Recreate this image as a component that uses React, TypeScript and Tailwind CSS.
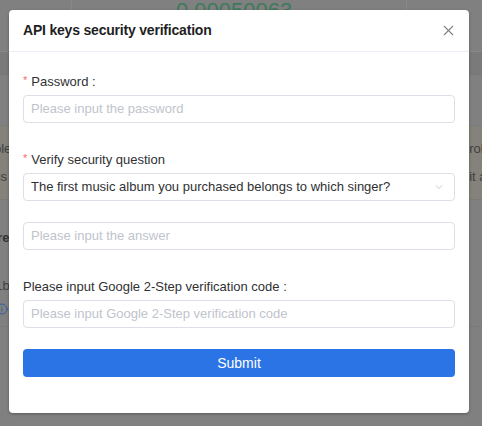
import { ChevronDown, X, Info } from "lucide-react";

const FONT = { fontFamily: '"Liberation Sans", Arial, sans-serif' };

function Label({ text, required }: { text: string; required?: boolean }) {
  return (
    <div className="flex items-center h-[20px] text-[13px] text-[#303133] leading-none">
      {required && <span className="text-[#f56c6c] text-[11px] mr-[4px] mt-[-2px]">*</span>}
      <span>{text}</span>
    </div>
  );
}

function TextInput({ placeholder }: { placeholder: string }) {
  return (
    <div className="h-[28px] border border-[#dcdfe6] rounded-[4px] flex items-center px-[7px] text-[13px] text-[#c0c4cc] bg-white">
      {placeholder}
    </div>
  );
}

export default function App() {
  return (
    <div className="relative w-[482px] h-[426px] overflow-hidden bg-[#808080]" style={FONT}>
      {/* página por trás do modal */}
      <div className="flex flex-col">
        <div className="h-[52px] flex border-b border-[#888]">
          <div className="w-[72px] border-r border-[#888]" />
          <div className="flex-1 pl-[104px]">
            <span className="text-[22px] leading-none text-[#3d7a5c] whitespace-nowrap">
              0.00050063 <span className="text-[11px]">BTC</span>
            </span>
          </div>
          <div className="w-[76px] border-l border-[#888]" />
        </div>
        <div className="h-[23px] bg-[#7a7a7a] border-b border-[#777]" />
        <div className="h-[50px]" />
        <div className="h-[75px] bg-[#85827b] border-y border-[#7b7b7b] flex justify-between items-center text-[13px] text-[#404040]">
          <div className="flex flex-col gap-[8px] ml-[-6px]">
            <span>ble</span>
            <span>ss v</span>
          </div>
          <div className="flex flex-col gap-[8px] mr-[-6px]">
            <span>rob</span>
            <span>it a</span>
          </div>
        </div>
        <div className="h-[28px]" />
        <div className="text-[13px] text-[#333] ml-[-10px] font-bold">are</div>
        <div className="h-[28px]" />
        <div className="text-[13px] text-[#404040] ml-[-12px]">d1b</div>
        <div className="mt-[8px] ml-[-4px] text-[#2f5f9f]">
          <Info size={12} />
        </div>
        <div className="h-[12px] border-b border-[#7a7a7a]" />
      </div>

      {/* modal */}
      <div className="absolute left-[9px] top-[10px] w-[460px] h-[403px] bg-white rounded-[4px] shadow-[0_1px_3px_rgba(0,0,0,0.3)] flex flex-col">
        <div className="h-[42px] flex items-center justify-between px-[14px] border-b border-[#ebeef5]">
          <span className="text-[14px] font-bold tracking-[-0.2px] text-[#1f1f1f]">API keys security verification</span>
          <X size={17} strokeWidth={1.5} className="text-[#7f7f7f] mr-[-2px]" />
        </div>
        <div className="flex flex-col px-[14px] pt-[19px]">
          <Label text="Password :" required />
          <div className="mt-[4px]">
            <TextInput placeholder="Please input the password" />
          </div>
          <div className="mt-[26px]">
            <Label text="Verify security question" required />
          </div>
          <div className="mt-[4px] h-[28px] border border-[#dcdfe6] rounded-[4px] flex items-center justify-between px-[7px] text-[13px] text-[#303133]">
            <span>The first music album you purchased belongs to which singer?</span>
            <ChevronDown size={12} strokeWidth={1.4} className="text-[#b0b3b8] mr-[2px]" />
          </div>
          <div className="mt-[21px]">
            <TextInput placeholder="Please input the answer" />
          </div>
          <div className="mt-[26px]">
            <Label text="Please input Google 2-Step verification code :" />
          </div>
          <div className="mt-[4px]">
            <TextInput placeholder="Please input Google 2-Step verification code" />
          </div>
          <button className="mt-[21px] h-[28px] rounded-[4px] bg-[#2a74e6] text-white text-[14px]">
            Submit
          </button>
        </div>
      </div>
    </div>
  );
}
